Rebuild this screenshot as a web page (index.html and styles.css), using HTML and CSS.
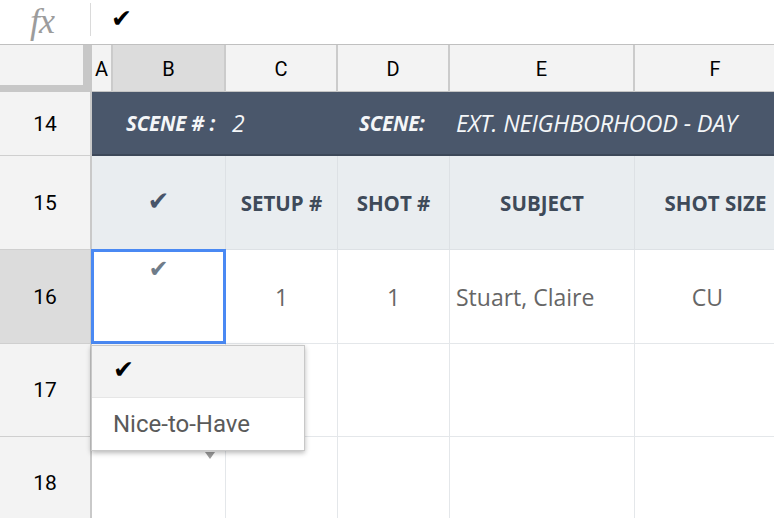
FILE: index.html
```html
<!DOCTYPE html>
<html>
<head>
<meta charset="utf-8">
<link rel="stylesheet" href="styles.css">
</head>
<body>
<div class="app">
  <div class="formula">
    <div class="fx">fx</div>
    <div class="fsep"></div>
    <div class="fval">✔</div>
  </div>
  <div class="sheet">
    <div class="corner"></div>
    <div class="colhead">A</div>
    <div class="colhead sel">B</div>
    <div class="colhead">C</div>
    <div class="colhead">D</div>
    <div class="colhead">E</div>
    <div class="colhead">F</div>

    <div class="rowhead">14</div>
    <div class="band">
      <span class="b-label">SCENE # :</span>
      <span class="b-val">2</span>
      <span class="b-label">SCENE:</span>
      <span class="b-val b-scene">EXT. NEIGHBORHOOD - DAY</span>
    </div>

    <div class="rowhead">15</div>
    <div class="hcell span2 check-h">✔</div>
    <div class="hcell">SETUP #</div>
    <div class="hcell">SHOT #</div>
    <div class="hcell">SUBJECT</div>
    <div class="hcell">SHOT SIZE</div>

    <div class="rowhead sel">16</div>
    <div class="cell span2 check-c">✔</div>
    <div class="cell center">1</div>
    <div class="cell center">1</div>
    <div class="cell left">Stuart, Claire</div>
    <div class="cell center cu">CU</div>

    <div class="rowhead">17</div>
    <div class="cell span2"></div>
    <div class="cell"></div>
    <div class="cell"></div>
    <div class="cell"></div>
    <div class="cell"></div>

    <div class="rowhead">18</div>
    <div class="cell span2"></div>
    <div class="cell"></div>
    <div class="cell"></div>
    <div class="cell"></div>
    <div class="cell"></div>
  </div>

  <div class="selection"></div>
  <div class="dd-arrow"></div>
  <div class="dropdown">
    <div class="dd-item active">✔</div>
    <div class="dd-item">Nice-to-Have</div>
  </div>
</div>
</body>
</html>
```
FILE: styles.css
```css
* { box-sizing: border-box; }
html, body { margin: 0; padding: 0; background: #fff; }
body { width: 774px; height: 518px; overflow: hidden; }

.app { position: relative; width: 774px; height: 518px; overflow: hidden; }

.formula {
  height: 45px;
  border-bottom: 1px solid #c0c0c0;
  display: flex;
  align-items: center;
}
.fx {
  width: 90px;
  height: 44px;
  padding-left: 30px;
  padding-top: 1px;
  font-family: "Liberation Serif", "DejaVu Serif", serif;
  font-style: italic;
  font-size: 36px;
  color: #9c9c9c;
  line-height: 40px;
  letter-spacing: -1px;
}
.fsep { width: 1px; height: 33px; background: #dadada; margin-top: -6px; }
.fval {
  padding-left: 20px;
  font-family: "DejaVu Sans", sans-serif;
  font-size: 25px;
  line-height: 1;
  color: #000;
  margin-top: -8px;
}

.sheet {
  display: grid;
  grid-template-columns: 92px 21px 113px 112px 112px 185px 162px;
  grid-template-rows: 47px 64px 94px 94px 93px 93px;
  font-family: "Open Sans", sans-serif;
}

.corner {
  background: #f3f3f3;
  border-right: 9px solid #c7c7c7;
  border-bottom: 7px solid #c7c7c7;
}
.colhead {
  background: #f3f3f3;
  border-right: 2px solid #cbcbcb;
  border-bottom: 1px solid #c4c4c4;
  display: flex;
  align-items: center;
  justify-content: center;
  font-family: Roboto, "Liberation Sans", sans-serif;
  font-size: 20px;
  color: #000;
  padding-top: 1px;
}
.colhead.sel { background: #dcdcdc; }

.rowhead {
  background: #f3f3f3;
  border-right: 2px solid #c9c9c9;
  border-bottom: 1px solid #cfcfcf;
  display: flex;
  align-items: center;
  justify-content: center;
  font-family: Roboto, "Liberation Sans", sans-serif;
  font-size: 21px;
  color: #000;
}
.rowhead.sel { background: #dcdcdc; }

.band {
  grid-column: 2 / -1;
  background: #4a576b;
  border-bottom: 2px solid #3d4859;
  display: grid;
  grid-template-columns: 106px 127px 97px 1fr;
  align-items: center;
  padding-left: 34px;
  color: #f4f6f8;
  font-style: italic;
  white-space: nowrap;
}
.b-label { font-weight: 700; font-size: 20.5px; letter-spacing: -0.2px; }
.b-val { font-weight: 400; font-size: 23px; }
.b-scene { font-size: 23.5px; letter-spacing: -0.2px; }

.hcell {
  background: #e9edf0;
  border-right: 1px solid #dde1e5;
  border-bottom: 1px solid #dde1e5;
  display: flex;
  align-items: center;
  justify-content: center;
  font-weight: 700;
  font-size: 20.5px;
  color: #3e4a59;
  white-space: nowrap;
}
.span2 { grid-column: span 2; }
.check-h { font-family: "DejaVu Sans", sans-serif; font-weight: 400; font-size: 26px; color: #48556a; padding-bottom: 4px; }

.cell {
  background: #fff;
  border-right: 1px solid #e4e7ea;
  border-bottom: 1px solid #e4e7ea;
  display: flex;
  align-items: center;
  font-size: 23px;
  color: #666;
  white-space: nowrap;
  overflow: hidden;
}
.cell.center { justify-content: center; }
.cell.left { padding-left: 6px; }
.cell.cu { padding-right: 16px; }
.check-c {
  align-items: flex-start;
  justify-content: center;
  font-family: "DejaVu Sans", sans-serif;
  font-size: 24px;
  line-height: 1;
  color: #6f7c89;
  padding-top: 7px;
}

.selection {
  position: absolute;
  left: 91px;
  top: 249px;
  width: 135px;
  height: 95px;
  border: 3px solid #4a89f3;
}

.dropdown {
  position: absolute;
  left: 91px;
  top: 345px;
  width: 214px;
  background: #fff;
  border: 1px solid #c8c8c8;
  box-shadow: 0 2px 5px rgba(0, 0, 0, 0.28);
}
.dd-item {
  height: 52px;
  display: flex;
  align-items: center;
  padding-left: 21px;
  font-family: Roboto, "Liberation Sans", sans-serif;
  font-size: 24px;
  color: #5a5a5a;
}
.dd-item.active {
  background: #f3f3f3;
  border-bottom: 1px solid #e6e6e6;
  font-family: "DejaVu Sans", sans-serif;
  font-size: 25px;
  color: #000;
  padding-bottom: 4px;
}

.dd-arrow {
  position: absolute;
  left: 205px;
  top: 452px;
  width: 0;
  height: 0;
  border-left: 5px solid transparent;
  border-right: 5px solid transparent;
  border-top: 7px solid #9a9a9a;
}
```
